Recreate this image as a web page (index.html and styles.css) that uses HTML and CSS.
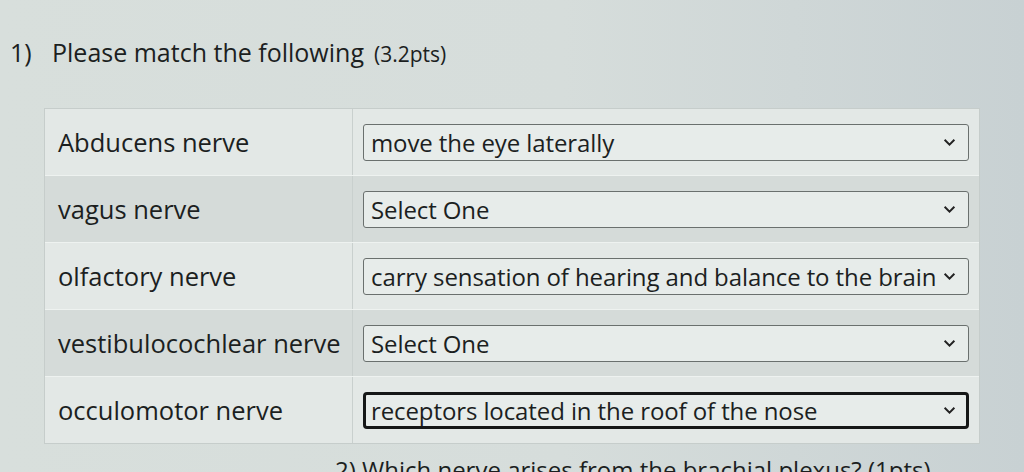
FILE: index.html
```html
<!DOCTYPE html>
<html>
<head>
<meta charset="utf-8">
<link rel="stylesheet" href="styles.css">
</head>
<body>
<div class="page">
  <h1 class="question"><span class="num">1)</span><span class="qtext">Please match the following</span> <span class="pts">(3.2pts)</span></h1>
  <div class="match">
    <div class="row odd">
      <div class="term">Abducens nerve</div>
      <div class="answer"><div class="select"><span class="val">move the eye laterally</span><svg class="chev" viewBox="0 0 12 8"><path d="M1.5 1.5 L6 6 L10.5 1.5" fill="none" stroke="#222" stroke-width="1.8"/></svg></div></div>
    </div>
    <div class="row even">
      <div class="term">vagus nerve</div>
      <div class="answer"><div class="select"><span class="val">Select One</span><svg class="chev" viewBox="0 0 12 8"><path d="M1.5 1.5 L6 6 L10.5 1.5" fill="none" stroke="#222" stroke-width="1.8"/></svg></div></div>
    </div>
    <div class="row odd">
      <div class="term">olfactory nerve</div>
      <div class="answer"><div class="select"><span class="val">carry sensation of hearing and balance to the brain</span><svg class="chev" viewBox="0 0 12 8"><path d="M1.5 1.5 L6 6 L10.5 1.5" fill="none" stroke="#222" stroke-width="1.8"/></svg></div></div>
    </div>
    <div class="row even">
      <div class="term">vestibulocochlear nerve</div>
      <div class="answer"><div class="select"><span class="val">Select One</span><svg class="chev" viewBox="0 0 12 8"><path d="M1.5 1.5 L6 6 L10.5 1.5" fill="none" stroke="#222" stroke-width="1.8"/></svg></div></div>
    </div>
    <div class="row odd">
      <div class="term">occulomotor nerve</div>
      <div class="answer"><div class="select focused"><span class="val">receptors located in the roof of the nose</span><svg class="chev" viewBox="0 0 12 8"><path d="M1.5 1.5 L6 6 L10.5 1.5" fill="none" stroke="#222" stroke-width="1.8"/></svg></div></div>
    </div>
  </div>
  <p class="next">2) Which nerve arises from the brachial plexus? (1pts)</p>
</div>
</body>
</html>
```
FILE: styles.css
```css
html, body {
  margin: 0;
  padding: 0;
}
body {
  background: linear-gradient(90deg, #d8dfdc 0%, #d6dddb 55%, #c8d1d3 100%);
  font-family: "Open Sans", "Noto Sans", sans-serif;
  color: #1c1f1f;
  width: 1024px;
  height: 472px;
  overflow: hidden;
}
.page {
  padding: 36px 0 0 10px;
}
.question {
  margin: 0;
  font-weight: 400;
  font-size: 25px;
  line-height: 32px;
  display: flex;
  align-items: baseline;
}
.num {
  width: 42px;
}
.qtext {
  margin-right: 10px;
}
.pts {
  font-size: 21px;
}
.match {
  margin: 38px 0 0 34px;
  width: 934px;
  border: 1px solid #c6cdcb;
  background: #e2e7e5;
}
.row {
  display: flex;
  height: 66px;
  border-bottom: 1px solid #eef2f0;
}
.row:last-child {
  border-bottom: none;
}
.row.odd {
  background: #e3e8e6;
}
.row.even {
  background: #d5dbd9;
}
.term {
  width: 308px;
  box-sizing: border-box;
  padding: 0 0 0 13px;
  display: flex;
  align-items: center;
  font-size: 25.5px;
  border-right: 1px solid #c9d0ce;
}
.answer {
  flex: 1;
  display: flex;
  align-items: center;
  padding: 0 10px 0 10px;
}
.select {
  flex: 1;
  height: 37px;
  box-sizing: border-box;
  border: 1px solid #6a706e;
  border-radius: 3px;
  background: #e7ecea;
  display: flex;
  align-items: center;
  justify-content: space-between;
  padding: 0 12px 0 7px;
  font-size: 24px;
  letter-spacing: -0.1px;
  white-space: nowrap;
}
.select.focused {
  border: 3px solid #151717;
  border-radius: 4px;
  padding-left: 5px;
  padding-right: 10px;
}
.chev {
  width: 13px;
  height: 9px;
  flex: none;
}
.next {
  margin: 10px 0 0 0;
  font-size: 24px;
  line-height: 32px;
  padding-left: 325px;
  white-space: nowrap;
}
```
